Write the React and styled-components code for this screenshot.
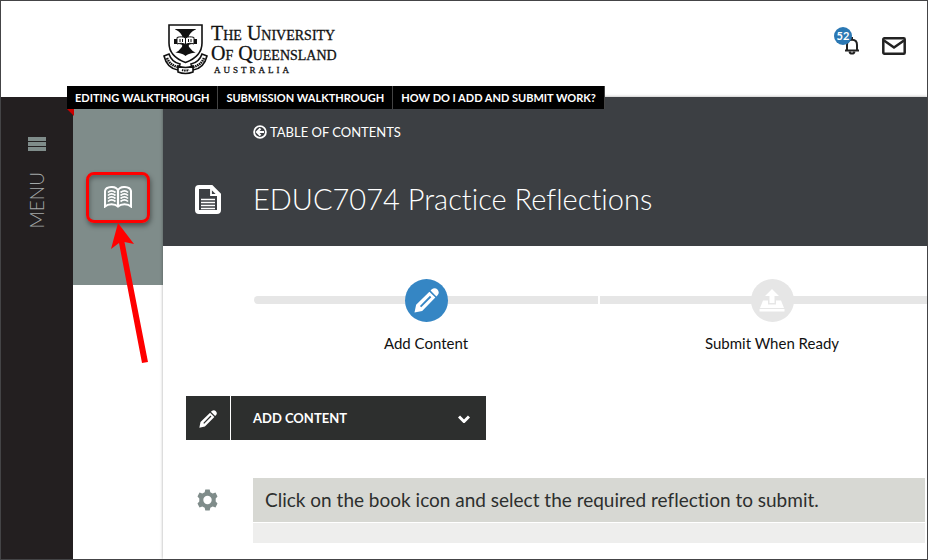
import styled, { createGlobalStyle } from "styled-components";

const GlobalStyle = createGlobalStyle`
  * {
    box-sizing: border-box;
  }
  body {
    margin: 0;
    background: #ffffff;
    color: #111111;
    font-family: Lato, "Open Sans", sans-serif;
    font-variant-ligatures: none;
  }
  ul, h1, h2, p {
    margin: 0;
    padding: 0;
    list-style: none;
  }
  button {
    border: none;
    padding: 0;
    background: none;
    font-family: inherit;
    color: inherit;
    cursor: pointer;
  }
  a {
    color: inherit;
    text-decoration: none;
  }
  svg {
    display: block;
    flex: none;
  }
`;

const Page = styled.div`
  position: relative;
  display: flex;
  flex-direction: column;
  min-height: 100vh;
  border: 1px solid #444446;
  overflow: hidden;
`;

const Header = styled.header`
  display: flex;
  justify-content: space-between;
  align-items: flex-start;
  height: 96px;
  padding: 22px 21px 0 162px;
`;

const Logo = styled.a`
  display: flex;
  gap: 3px;
  color: #111111;
`;

const LogoText = styled.span`
  display: flex;
  flex-direction: column;
  font-family: "Liberation Serif", serif;
  font-size: 20px;
  line-height: 20px;
  font-variant: small-caps;
  white-space: nowrap;
  -webkit-text-stroke: 0.3px #111111;
`;

const LogoCountry = styled.span`
  padding: 1px 0 0 3px;
  font-size: 9px;
  line-height: 12px;
  letter-spacing: 3px;
  font-variant: normal;
`;

const HeaderIcons = styled.div`
  display: flex;
  gap: 22px;
  padding-top: 14px;
  color: #222222;
`;

const IconButton = styled.button`
  position: relative;
  display: flex;
`;

const Badge = styled.span`
  position: absolute;
  top: -10px;
  left: -10px;
  width: 18px;
  height: 18px;
  border-radius: 50%;
  background: #2b78b4;
  color: #ffffff;
  font-size: 11px;
  font-weight: 700;
  line-height: 18px;
  text-align: center;
`;

/* floats over the seam between the header and the banner */
const HelpLinks = styled.nav`
  position: absolute;
  top: 85px;
  left: 66px;
  z-index: 2;
  display: flex;
  gap: 1px;
  background: #444444;
  border-right: 1px solid #444444;
  &::after {
    content: "";
    position: absolute;
    top: 100%;
    left: 0;
    border-top: 7px solid #cc0000;
    border-left: 7px solid transparent;
  }
`;

const HelpLink = styled.a`
  padding: 0 8px;
  background: #000000;
  color: #ffffff;
  font-size: 11px;
  font-weight: 700;
  line-height: 23px;
  white-space: nowrap;
`;

const Body = styled.div`
  display: flex;
  flex: 1;
`;

const MenuBar = styled.button`
  display: flex;
  flex-direction: column;
  align-items: center;
  justify-content: flex-start;
  gap: 21px;
  width: 72px;
  padding-top: 40px;
  background: #231f20;
  color: #7f8c8a;
`;

const MenuLabel = styled.span`
  writing-mode: vertical-rl;
  transform: rotate(180deg);
  color: #a3a8a8;
  font-size: 19px;
  font-weight: 300;
  line-height: 22px;
`;

const Rail = styled.aside`
  width: 90px;
`;

const RailTop = styled.div`
  display: flex;
  flex-direction: column;
  align-items: center;
  height: 188px;
  padding-top: 75px;
  background: #7f8c8a;
`;

const BookButton = styled.button`
  position: relative;
  display: flex;
  justify-content: center;
  width: 64px;
  height: 51px;
  padding-top: 11px;
  border: 3px solid #ff0000;
  border-radius: 8px;
  color: #ffffff;
  box-shadow: 1px 3px 5px rgba(0, 0, 0, 0.4), inset 1px 3px 4px rgba(0, 0, 0, 0.3);
`;

const Pointer = styled.svg`
  position: absolute;
  top: 48px;
  left: 20px;
  z-index: 1;
`;

const Main = styled.main`
  flex: 1;
  min-width: 0;
  background: #ffffff;
  box-shadow: 0 0 3px rgba(0, 0, 0, 0.35);
`;

const Banner = styled.section`
  height: 149px;
  padding: 26px 0 0 32px;
  background: #3c3f43;
  color: #ffffff;
`;

const BackLink = styled.a`
  display: flex;
  align-items: center;
  gap: 3px;
  margin-left: 58px;
  font-size: 13px;
  line-height: 18px;
`;

const TitleRow = styled.div`
  display: flex;
  align-items: center;
  gap: 32px;
  padding-top: 39px;
`;

const Title = styled.h1`
  font-size: 29px;
  font-weight: 300;
  line-height: 38px;
`;

const Steps = styled.ul`
  display: flex;
  gap: 2px;
  margin: 33px -17px 0 91px;
`;

const Step = styled.li`
  flex: 1;
  font-size: 15px;
  line-height: 20px;
  text-align: center;
`;

const Track = styled.div`
  display: flex;
  align-items: center;
  margin-bottom: 11px;
  &::before,
  &::after {
    content: "";
    flex: 1;
    height: 8px;
    margin-bottom: 1px;
    background: #e6e6e6;
  }
  &::before {
    border-radius: ${(props) => (props.$first ? "4px 0 0 4px" : "0")};
    margin-right: -2px;
  }
  &::after {
    margin-left: -2px;
  }
`;

const StepDot = styled.span`
  z-index: 1;
  display: flex;
  align-items: center;
  justify-content: center;
  width: 43px;
  height: 43px;
  border-radius: 50%;
  background: ${(props) => (props.$active ? "#3586c4" : "#e6e6e6")};
  color: #ffffff;
`;

const Actions = styled.div`
  display: flex;
  gap: 1px;
  width: 300px;
  margin: 43px 0 38px 23px;
`;

const ActionButton = styled.button`
  display: flex;
  flex: ${(props) => (props.$wide ? "1" : "0 0 44px")};
  align-items: center;
  justify-content: ${(props) => (props.$wide ? "space-between" : "center")};
  height: 44px;
  padding: ${(props) => (props.$wide ? "0 16px 0 22px" : "2px 0 0")};
  background: #2d2f2e;
  color: #ffffff;
  font-size: 13px;
  font-weight: 700;
`;

const Module = styled.section`
  display: flex;
  align-items: flex-start;
  gap: 35px;
  padding: 0 2px 16px 34px;
`;

const GearButton = styled.button`
  display: flex;
  padding-top: 11px;
  color: #7f8c8a;
`;

const ModuleCard = styled.div`
  flex: 1;
  display: flex;
  flex-direction: column;
  gap: 1px;
`;

const ModuleTitle = styled.h2`
  padding: 0 12px;
  background: #d7d8d3;
  color: #2d2f2e;
  font-size: 19px;
  font-weight: 400;
  line-height: 44px;
`;

const ModuleFooter = styled.div`
  height: 20px;
  background: #eeeeed;
`;

const Crest = () => (
  <svg width="45" height="52" viewBox="0 0 45 52" fill="none" aria-hidden="true">
    <path d="M6 2h33v18c0 10-7 16-16.500 19.500C13 36 6 30 6 20z" fill="#fff" stroke="#111" strokeWidth="1.600" />
    <path d="M12 6h21c-1 5-4 7-5 10h6v5h-6c1 4 4 6 6 8-3 1-8 1-11.500 4-3-3-8-3-11.500-4 2-2 5-4 6-8h-6v-5h6c-1-3-4-5-5-10z" fill="#111" />
    <path d="M11 8c3 1 5 3 6.500 5.500M34 8c-3 1-5 3-6.500 5.500M12 28c2.500-1 4-3 5.500-5M33 28c-2.500-1-4-3-5.500-5" stroke="#fff" strokeWidth="3.500" strokeLinecap="round" />
    <path d="M14 14.500c3-1 6-1 8.500.5 2.500-1.500 5.500-1.500 8.500-.5V21c-3-1-6-1-8.500.5C20 20 17 20 14 21z" fill="#fff" stroke="#111" />
    <path d="M22.500 15v6.500M17 16v3M19.500 16v3M25.500 16v3M28 16v3" stroke="#111" />
    <path d="M1 33l5-2c2 6 6 9 11 10l-2 6C8 46 3 41 1 33zM44 33l-5-2c-2 6-6 9-11 10l2 6c7-1 12-6 14-14z" fill="#fff" stroke="#111" strokeWidth="1.600" />
    <path d="M4 35c2 5 6 8 11 9M41 35c-2 5-6 8-11 9" stroke="#111" strokeWidth="2.500" strokeDasharray="1.500 .7" />
    <path d="M15 43c5 2 10 2 15 0v6c-5 2-10 2-15 0z" fill="#fff" stroke="#111" strokeWidth="1.600" />
    <path d="M19 47c2 .7 5 .7 7 0" stroke="#111" strokeWidth="2" strokeDasharray="1.500 .7" />
  </svg>
);

const Bell = () => (
  <svg width="16" height="18" viewBox="0 0 16 18" fill="none" stroke="currentColor" strokeWidth="2" aria-hidden="true">
    <path d="M8 0v2.500M3 13V8c0-3.500 2-5.200 5-5.200S13 4.500 13 8v5M1 13.500h14" />
    <path d="M5.500 14.500c.5 2.800 4.500 2.800 5 0" />
  </svg>
);

const Envelope = () => (
  <svg width="24" height="18" viewBox="0 0 24 18" fill="none" stroke="currentColor" strokeWidth="2.500" aria-hidden="true">
    <rect x="1.300" y="1.300" width="21.400" height="15.400" rx="1" />
    <path d="M2 3.500l10 7 10-7" />
  </svg>
);

const Bars = () => (
  <svg width="18" height="14" viewBox="0 0 18 14" fill="currentColor" aria-hidden="true">
    <path d="M0 0h18v4H0zM0 5h18v4H0zM0 10h18v4H0z" />
  </svg>
);

const Book = () => (
  <svg width="28" height="22" viewBox="0 0 28 22" fill="none" stroke="currentColor" aria-hidden="true">
    <path d="M1 20.500V5C2 0 12-.5 14 4.500 16-.5 26 0 27 5v15.500c-3-3-10-3-13 0-3-3-10-3-13 0z" strokeWidth="2" />
    <path d="M14 4.500v16" strokeWidth="2.200" />
    <path d="M4 6.500c2-2 5-2 7.500 0M4 9.500c2-2 5-2 7.500 0M4 12.500c2-2 5-2 7.500 0M4 15.500c2-2 5-2 7.500 0M16.500 6.500c2.500-2 5.500-2 7.500 0M16.500 9.500c2.500-2 5.500-2 7.500 0M16.500 12.500c2.500-2 5.500-2 7.500 0M16.500 15.500c2.500-2 5.500-2 7.500 0" strokeWidth="1.700" />
  </svg>
);

const Document = () => (
  <svg width="26" height="29" viewBox="0 0 26 29" fill="none" stroke="currentColor" aria-hidden="true">
    <path d="M4 2h12.500L24 9.500V25c0 1.200-.8 2-2 2H4c-1.200 0-2-.8-2-2V4c0-1.200.8-2 2-2z" strokeWidth="4" />
    <path d="M16 3v7h7" strokeWidth="1.800" />
    <path d="M6 14.500h14M6 17.500h14M6 20.500h14M6 23.500h14" strokeWidth="1.600" />
  </svg>
);

const BackArrow = () => (
  <svg width="14" height="14" viewBox="0 0 14 14" fill="none" stroke="currentColor" aria-hidden="true">
    <circle cx="7" cy="7" r="5.900" strokeWidth="1.800" />
    <path d="M7.500 3.500L4 7l3.500 3.500M4 7h7" strokeWidth="2.200" />
  </svg>
);

const Pencil = ({ size }) => (
  <svg width={size} height={size} viewBox="0 0 26 26" aria-hidden="true">
    <path
      fill="currentColor"
      fillRule="evenodd"
      d="M.500 25.500l1.700-8L16 3.800l6.200 6.200L8.500 23.800zM6.200 18.600l1.300 1.300L18 9.500l-1.400-1.400zM17.200 2.700l1.300-1.300c4-3.500 9.600 2 6.200 6l-1.400 1.400z"
    />
  </svg>
);

const Submit = () => (
  <svg width="26" height="23" viewBox="0 0 26 23" fill="currentColor" aria-hidden="true">
    <path d="M13 0l7 7h-4.500v7h-5V7H6z" />
    <path d="M4 11.500h5v4h8v-4h5l3 7.500H1zM.500 20h25v2.500H.500z" />
  </svg>
);

const Chevron = () => (
  <svg width="12" height="9" viewBox="0 0 12 9" fill="none" stroke="currentColor" strokeWidth="3" aria-hidden="true">
    <path d="M1 2.500l5 5 5-5" />
  </svg>
);

const Gear = () => (
  <svg width="21" height="22" viewBox="0 0 21 22" aria-hidden="true">
    <path
      fill="currentColor"
      fillRule="evenodd"
      d="M8.300.5h4.400l.6 2.700 2.400 1.300 2.800-.9 2 3.800-1.800 2v3.200l1.800 2-2 3.800-2.800-.9-2.400 1.300-.6 2.700H8.300l-.6-2.700-2.400-1.300-2.800.9-2-3.800 1.800-2V9.400l-1.800-2 2-3.800 2.800.9 2.400-1.300zM10.500 6.800a4.200 4.200 0 100 8.400 4.200 4.200 0 000-8.400z"
    />
  </svg>
);

const helpLinks = [
  "EDITING WALKTHROUGH",
  "SUBMISSION WALKTHROUGH",
  "HOW DO I ADD AND SUBMIT WORK?",
];

const App = () => {
  return (
    <Page>
      <GlobalStyle />
      <Header>
        <Logo href="#home">
          <Crest />
          <LogoText>
            <span>The University</span>
            <span>Of Queensland</span>
            <LogoCountry>AUSTRALIA</LogoCountry>
          </LogoText>
        </Logo>
        <HeaderIcons>
          <IconButton aria-label="Notifications">
            <Bell />
            <Badge>52</Badge>
          </IconButton>
          <IconButton aria-label="Messages">
            <Envelope />
          </IconButton>
        </HeaderIcons>
      </Header>
      <Body>
        <MenuBar>
          <Bars />
          <MenuLabel>MENU</MenuLabel>
        </MenuBar>
        <Rail>
          <RailTop>
            <BookButton aria-label="Pages">
              <Book />
              <Pointer width="45" height="142" viewBox="0 0 45 142" aria-hidden="true">
                <path fill="#ff0000" d="M9 0l16 21-9.500-2L39 139l-6 1L10 20l-8 6z" />
              </Pointer>
            </BookButton>
          </RailTop>
        </Rail>
        <Main>
          <Banner>
            <BackLink href="#contents">
              <BackArrow />
              TABLE OF CONTENTS
            </BackLink>
            <TitleRow>
              <Document />
              <Title>EDUC7074 Practice Reflections</Title>
            </TitleRow>
          </Banner>
          <Steps>
            <Step>
              <Track $first>
                <StepDot $active>
                  <Pencil size={25} />
                </StepDot>
              </Track>
              Add Content
            </Step>
            <Step>
              <Track>
                <StepDot>
                  <Submit />
                </StepDot>
              </Track>
              Submit When Ready
            </Step>
          </Steps>
          <Actions>
            <ActionButton aria-label="Edit">
              <Pencil size={18} />
            </ActionButton>
            <ActionButton $wide>
              ADD CONTENT
              <Chevron />
            </ActionButton>
          </Actions>
          <Module>
            <GearButton aria-label="Settings">
              <Gear />
            </GearButton>
            <ModuleCard>
              <ModuleTitle>Click on the book icon and select the required reflection to submit.</ModuleTitle>
              <ModuleFooter />
            </ModuleCard>
          </Module>
        </Main>
      </Body>
      <HelpLinks>
        {helpLinks.map((label) => (
          <HelpLink key={label} href="#help">{label}</HelpLink>
        ))}
      </HelpLinks>
    </Page>
  );
};

export default App;
